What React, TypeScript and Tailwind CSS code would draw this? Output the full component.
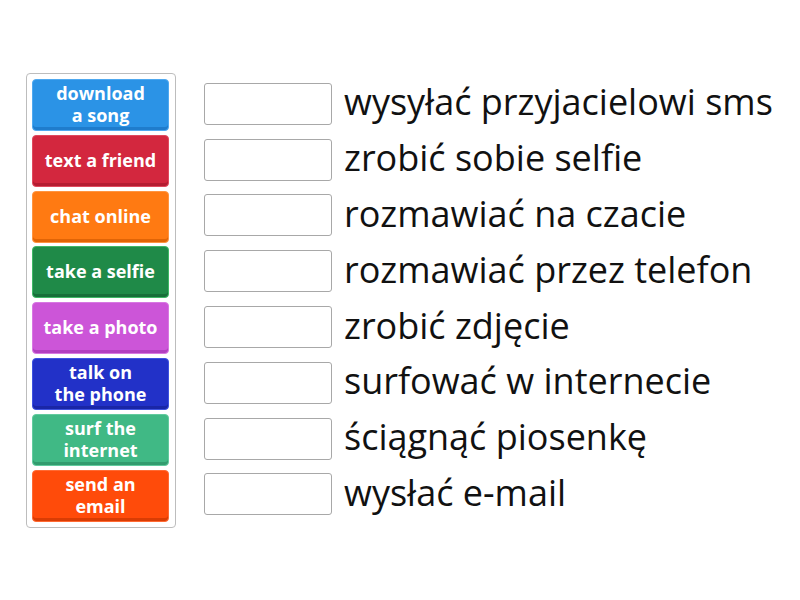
import React from "react";

const tiles: { lines: string[]; bg: string }[] = [
  { lines: ["download", "a song"], bg: "bg-[#2b93e6] border-[#4fa9f0] shadow-[inset_0_-3px_0_#1f7ccc]" },
  { lines: ["text a friend"], bg: "bg-[#d3273e] border-[#e04a5e] shadow-[inset_0_-3px_0_#b51c31]" },
  { lines: ["chat online"], bg: "bg-[#ff7a12] border-[#ff9440] shadow-[inset_0_-3px_0_#e06406]" },
  { lines: ["take a selfie"], bg: "bg-[#1f8a48] border-[#3fb866] shadow-[inset_0_-3px_0_#176f39]" },
  { lines: ["take a photo"], bg: "bg-[#cc55d8] border-[#d877e2] shadow-[inset_0_-3px_0_#b23fc0]" },
  { lines: ["talk on", "the phone"], bg: "bg-[#2231c8] border-[#3e52e0] shadow-[inset_0_-3px_0_#1a26a6]" },
  { lines: ["surf the", "internet"], bg: "bg-[#40b985] border-[#62cb9e] shadow-[inset_0_-3px_0_#329c6e]" },
  { lines: ["send an", "email"], bg: "bg-[#ff4b0a] border-[#ff6a33] shadow-[inset_0_-3px_0_#d93c04]" },
];

const words = [
  "wysyłać przyjacielowi sms",
  "zrobić sobie selfie",
  "rozmawiać na czacie",
  "rozmawiać przez telefon",
  "zrobić zdjęcie",
  "surfować w internecie",
  "ściągnąć piosenkę",
  "wysłać e-mail",
];

export default function App() {
  return (
    <div className="w-[800px] h-[600px] bg-white flex items-start pt-[73px] pl-[26px]" style={{ fontFamily: '"Open Sans", "Noto Sans", sans-serif' }}>
      <div className="w-[150px] border border-[#bdbdbd] rounded-[4px] pl-[5px] pr-[6px] pt-[5px] pb-[5px] flex flex-col gap-[3.8px]">
        {tiles.map((t, i) => (
          <div
            key={i}
            className={`h-[52px] rounded-[4px] border ${t.bg} flex flex-col items-center justify-center pb-[2px] text-white font-bold text-[18px] leading-[22px]`}
          >
            {t.lines.map((l, j) => (
              <span key={j}>{l}</span>
            ))}
          </div>
        ))}
      </div>
      <div className="ml-[28px] pt-[3px] flex flex-col">
        {words.map((w, i) => (
          <div key={i} className="h-[55.8px] flex items-center">
            <div className="w-[128px] h-[42px] border border-[#a8a8a8] rounded-[3px] bg-white" />
            <span className="ml-[12px] text-[36px] text-[#111] leading-none pb-[3px]">{w}</span>
          </div>
        ))}
      </div>
    </div>
  );
}
